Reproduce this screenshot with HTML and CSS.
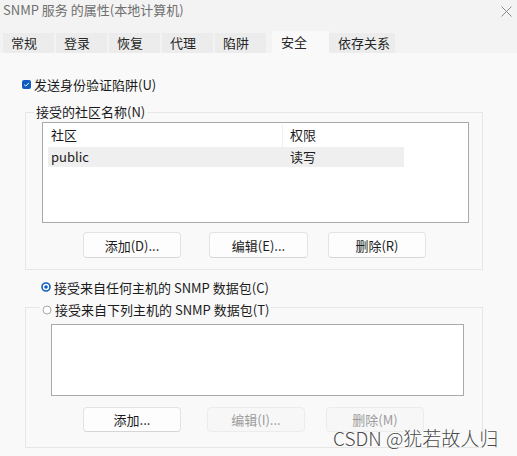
FILE: index.html
```html
<!DOCTYPE html>
<html lang="zh-CN">
<head>
    <meta charset="UTF-8">
    <meta name="viewport" content="width=device-width, initial-scale=1.0">
    <title>SNMP 服务 的属性</title>
    <link rel="stylesheet" href="styles.css">
</head>
<body>
    <!-- Window title -->
    <div class="titlebar">
        <span class="title">SNMP 服务 的属性(本地计算机)</span>
        <svg class="close" width="11" height="11" viewBox="0 0 11 11">
            <path d="M0.5 0.5 L10.5 10.5 M10.5 0.5 L0.5 10.5" stroke="#8a8a8a" stroke-width="1" fill="none"/>
        </svg>
    </div>

    <!-- Tabs -->
    <div class="tabs">
        <div class="tab">常规</div>
        <div class="tab">登录</div>
        <div class="tab">恢复</div>
        <div class="tab">代理</div>
        <div class="tab">陷阱</div>
        <div class="tab active">安全</div>
        <div class="tab wide">依存关系</div>
    </div>

    <!-- Security page -->
    <div class="panel">
        <div class="check-row">
            <svg class="checkbox" width="9" height="9" viewBox="0 0 9 9">
                <rect width="9" height="9" rx="2" fill="#0f5cc0"/>
                <path d="M2.2 4.6 L3.8 6.1 L6.9 2.9" stroke="#fff" stroke-width="1" fill="none"/>
            </svg>
            <span>发送身份验证陷阱(U)</span>
        </div>

        <fieldset class="group group-community">
            <legend class="group-label">接受的社区名称(N)</legend>
            <div class="listbox list-community">
                <div class="list-row list-head">
                    <div class="cell col-name">社区</div>
                    <div class="cell col-right">权限</div>
                </div>
                <div class="list-row selected">
                    <div class="cell col-name">public</div>
                    <div class="cell col-right">读写</div>
                </div>
            </div>
            <div class="buttons">
                <button class="btn btn-add">添加(D)...</button>
                <button class="btn btn-edit">编辑(E)...</button>
                <button class="btn btn-del">删除(R)</button>
            </div>
        </fieldset>

        <div class="radio-row">
            <svg class="radio" width="10" height="10" viewBox="0 0 10 10">
                <circle cx="5" cy="5" r="4" fill="#fff" stroke="#0f5cc0" stroke-width="1.6"/>
                <circle cx="5" cy="5" r="1.8" fill="#0f5cc0"/>
            </svg>
            <span>接受来自任何主机的 SNMP 数据包(C)</span>
        </div>

        <fieldset class="group group-hosts">
            <legend class="group-radio">
                <svg class="radio" width="10" height="10" viewBox="0 0 10 10">
                    <circle cx="5" cy="5" r="4" fill="#fff" stroke="#a8a8a8" stroke-width="1"/>
                </svg>
                <span>接受来自下列主机的 SNMP 数据包(T)</span>
            </legend>
            <div class="listbox list-hosts"></div>
            <div class="buttons">
                <button class="btn btn-add2">添加...</button>
                <button class="btn btn-edit2" disabled>编辑(I)...</button>
                <button class="btn btn-del2" disabled>删除(M)</button>
            </div>
        </fieldset>
    </div>

    <!-- Watermark from the screenshot source -->
    <div class="watermark">CSDN @犹若故人归</div>
</body>
</html>
```

FILE: styles.css
```css
body {
    margin: 0;
    width: 517px;
    height: 456px;
    overflow: hidden;
    position: relative;
    background: #f3f3f3;
    font-family: "Noto Sans CJK SC", "Noto Sans", sans-serif;
    font-size: 13px;
    color: #1b1b1b;
}

/* Title bar */
.titlebar {
    height: 24px;
    display: flex;
    align-items: center;
    justify-content: space-between;
    padding: 0 5px 0 3px;
    margin-top: -3px;
}

.title {
    color: #6f6f6f;
    font-size: 13px;
}

.close {
    margin-top: 4px;
}

/* Tab strip */
.tabs {
    display: flex;
    align-items: flex-end;
    height: 22px;
    padding: 10px 0 0 3px;
}

.tab {
    width: 51px;
    height: 20px;
    line-height: 20px;
    padding-left: 8px;
    box-sizing: border-box;
    margin-right: 2px;
    background: #ececec;
    color: #262626;
}

.tab.active {
    width: 57px;
    height: 23px;
    line-height: 21px;
    margin-left: 4px;
    margin-right: 0;
    padding-left: 9px;
    background: #f9f9f9;
    margin-bottom: -1px;
    position: relative;
}

.tab.wide {
    width: 66px;
    padding-left: 9px;
}

/* Page body */
.panel {
    background: #f9f9f9;
    height: 403px;
    padding-top: 23px;
    box-sizing: border-box;
}

.check-row {
    display: flex;
    align-items: center;
    height: 16px;
    padding-left: 22px;
}

.checkbox {
    margin-right: 3px;
}

/* Group boxes */
.group {
    margin: 0 0 0 25px;
    width: 458px;
    padding: 0;
    box-sizing: border-box;
    border: 1px solid #e6e6e6;
    min-width: 0;
}

.group-community {
    margin-top: 12px;
    padding-bottom: 11px;
}

.group-label {
    margin-left: 8px;
    padding: 0 2px;
    line-height: 16px;
}

.group-hosts {
    margin-top: 3px;
    padding-bottom: 15px;
}

.group-radio {
    margin-left: 14px;
    padding: 6px 2px 0 2px;
    line-height: 12px;
    display: flex;
    align-items: center;
}

.radio {
    margin-right: 3px;
    flex-shrink: 0;
}

.radio-row {
    display: flex;
    align-items: center;
    height: 16px;
    margin-top: 9px;
    padding-left: 41px;
}

/* List views */
.listbox {
    background: #fff;
    border: 1px solid #a9a9a9;
    box-sizing: border-box;
}

.list-community {
    margin: 2px 0 0 16px;
    width: 427px;
    height: 101px;
    padding: 1px 0 0 5px;
}

.list-hosts {
    margin: 8px 0 0 25px;
    width: 413px;
    height: 72px;
}

.list-row {
    display: flex;
    width: 356px;
    height: 20px;
    line-height: 20px;
}

.list-head {
    height: 23px;
    line-height: 22px;
}

.list-row.selected {
    background: #efefef;
}

.cell {
    padding-left: 3px;
    box-sizing: border-box;
}

.col-name {
    width: 235px;
}

.list-head .col-name {
    border-right: 1px solid #f0f0f0;
}

.col-right {
    padding-left: 7px;
}

/* Buttons */
.buttons {
    display: flex;
    margin-top: 9px;
}

.btn {
    height: 26px;
    width: 98px;
    padding: 0;
    background: #fdfdfd;
    border: 1px solid #e3e3e3;
    border-bottom-color: #d6d6d6;
    border-radius: 4px;
    font-family: inherit;
    font-size: 13px;
    color: #1b1b1b;
}

.btn-add { margin-left: 57px; }
.btn-edit { margin-left: 28px; width: 99px; }
.btn-del { margin-left: 20px; }

.group-hosts .buttons {
    margin-top: 11px;
}

.group-hosts .btn {
    height: 25px;
}

.btn-add2 { margin-left: 57px; }
.btn-edit2 { margin-left: 26px; }
.btn-del2 { margin-left: 21px; }

.btn:disabled {
    background: #f7f7f7;
    border-color: #ececec;
    color: #9c9c9c;
}

/* Watermark */
.watermark {
    position: absolute;
    left: 333px;
    top: 424px;
    font-size: 19px;
    font-weight: 300;
    color: #4a4a4a;
    text-shadow: 0 0 2px #fff, 0 0 2px #fff;
    white-space: nowrap;
}
```
